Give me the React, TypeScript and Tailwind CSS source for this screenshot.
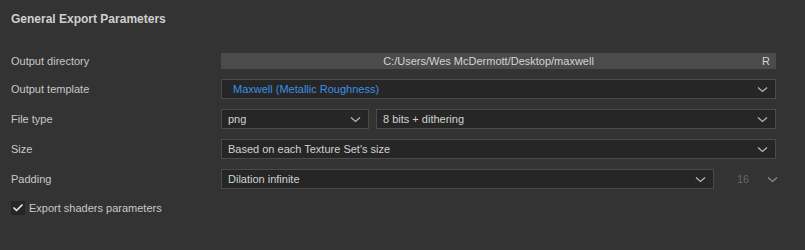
import { Check } from 'lucide-react';

function Chevron({ className = 'text-[#b4b4b4]' }: { className?: string }) {
  return (
    <svg width="11" height="7" viewBox="0 0 11 7" className={className}>
      <path d="M1 1.5 L5.5 5.5 L10 1.5" fill="none" stroke="currentColor" strokeWidth="1.3" />
    </svg>
  );
}

function Select({ value, className = '', blue = false }: { value: string; className?: string; blue?: boolean }) {
  return (
    <div
      className={`flex h-5 items-center justify-between border border-[#4a4a4a] bg-[#262626] pr-[7px] ${
        blue ? 'pl-[11px] text-[#3b8fe3]' : 'pl-[6px] text-[#d2d2d2]'
      } ${className}`}
    >
      <span className="truncate">{value}</span>
      <Chevron />
    </div>
  );
}

function Row({ label, children }: { label: string; children: React.ReactNode }) {
  return (
    <div className="flex h-5 items-center">
      <div className="w-[210px] shrink-0 text-[#c8c8c8]">{label}</div>
      <div className="flex flex-1 items-center">{children}</div>
    </div>
  );
}

export default function App() {
  return (
    <div
      className="h-[250px] w-[805px] bg-[#333333] pl-[11px] pr-[29px] pt-[13px] text-[11px] leading-none"
      style={{ fontFamily: '"Liberation Sans", Arial, sans-serif' }}
    >
      <h2 className="text-[12px] font-bold text-[#d0d0d0]">General Export Parameters</h2>

      <div className="mt-[28px] flex flex-col gap-[10px]">
        <div className="flex h-4 items-center">
          <div className="w-[210px] shrink-0 text-[#c8c8c8]">Output directory</div>
          <div className="flex h-4 flex-1 items-center bg-[#4b4b4b] text-[#d4d4d4]">
            <span className="flex-1 text-center">C:/Users/Wes McDermott/Desktop/maxwell</span>
            <span className="w-5 text-center">R</span>
          </div>
        </div>

        <Row label="Output template">
          <Select value="Maxwell (Metallic Roughness)" className="flex-1" blue />
        </Row>

        <Row label="File type">
          <Select value="png" className="w-[148px]" />
          <Select value="8 bits + dithering" className="ml-[7px] flex-1" />
        </Row>

        <Row label="Size">
          <Select value="Based on each Texture Set's size" className="flex-1" />
        </Row>

        <Row label="Padding">
          <Select value="Dilation infinite" className="flex-1" />
          <div className="flex w-[62px] items-center pl-[23px] text-[#666666]">
            <span>16</span>
            <span className="ml-[18px]">
              <Chevron className="text-[#8a8a8a]" />
            </span>
          </div>
        </Row>

        <div className="mt-[2px] flex h-[14px] items-center">
          <div className="flex h-[14px] w-[14px] items-center justify-center bg-[#262626]">
            <Check className="h-[12px] w-[12px] text-[#e6e6e6]" strokeWidth={3.5} />
          </div>
          <span className="ml-1 text-[#c8c8c8]">Export shaders parameters</span>
        </div>
      </div>
    </div>
  );
}
